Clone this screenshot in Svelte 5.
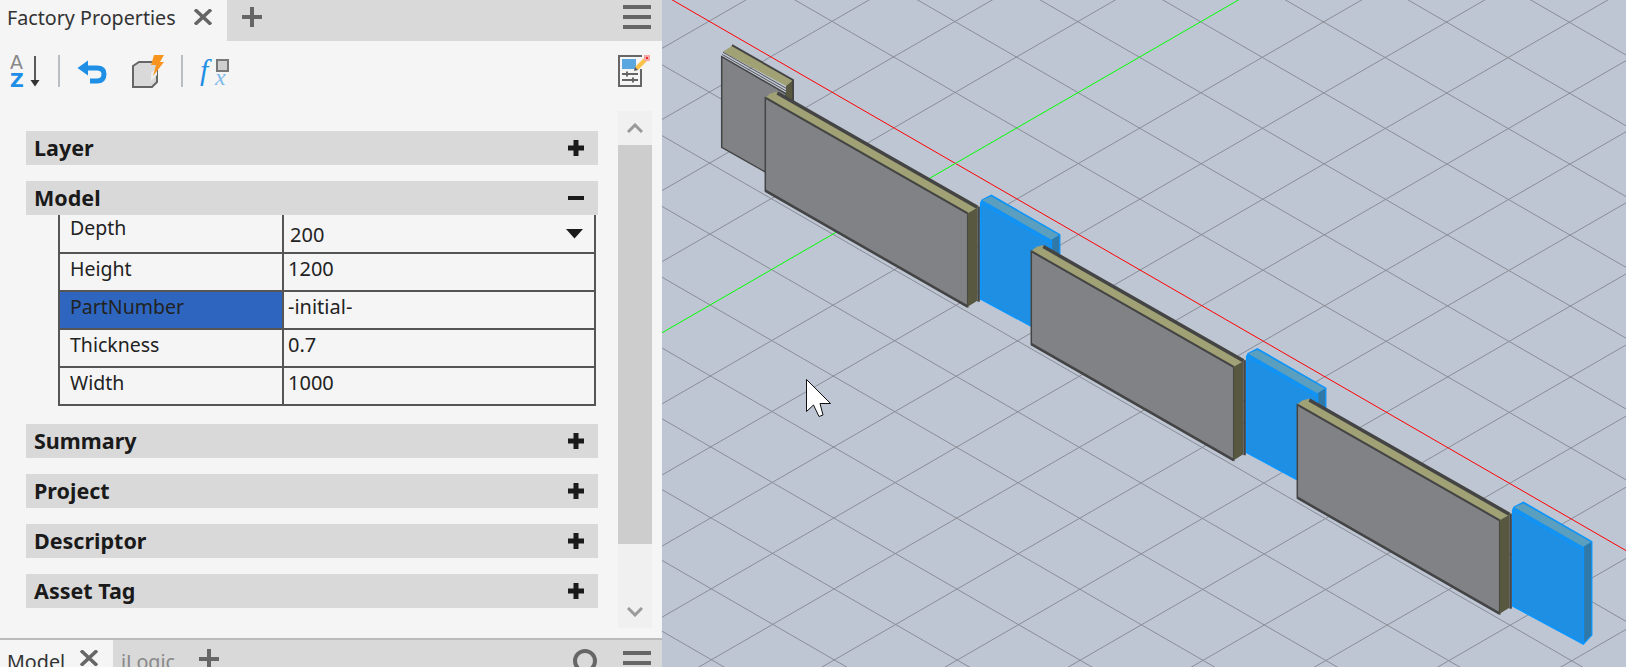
<script>
  const T = Math.tan(Math.PI / 6);
  const X0 = 662, X1 = 1626, STEP_C = 70.8, STEP_D = 71.1;
  const cRed = -388.2, dGreen = 715;
  const grid = [];
  for (let k = -8; k < 20; k++) {
    const c = cRed + k * STEP_C;
    if (k !== 0) grid.push({ x1: X0, y1: c + T * X0, x2: X1, y2: c + T * X1 });
  }
  for (let k = -14; k < 24; k++) {
    const d = dGreen + k * STEP_D;
    if (k !== 0) grid.push({ x1: X0, y1: d - T * X0, x2: X1, y2: d - T * X1 });
  }
  const yRed = (x) => cRed + T * x;
  const yGreen = (x) => dGreen - T * x;
  const units = [0, 1, 2].map((i) => ({
    pan: `${765.3 + i * 266},${97.7 + i * 153.5}`,
    blue: `${980.7 + i * 266},${203 + i * 153.5}`
  }));
  const rows = [
    { k: 'Height', v: '1200' },
    { k: 'PartNumber', v: '-initial-', sel: true },
    { k: 'Thickness', v: '0.7' },
    { k: 'Width', v: '1000' }
  ];
  const sectionsBottom = ['Summary', 'Project', 'Descriptor', 'Asset Tag'];
  const plusPath = 'M5.5 0h5v5.500h5.500v5h-5.500v5.500h-5v-5.500H0v-5h5.500z';
</script>

<div class="app">
  <aside class="panel">
    <div class="tabbar">
      <div class="tab">
        <span class="tab-label">Factory Properties</span>
        <svg class="x" viewBox="0 0 18 16" width="18" height="16"><path d="M1 0.5 L17 15.5 M17 0.5 L1 15.5" /></svg>
      </div>
      <svg class="plus" viewBox="0 0 20 20" width="20" height="20"><path d="M8 0h4v8h8v4h-8v8h-4v-8h-8v-4h8z" /></svg>
      <svg class="burger" viewBox="0 0 28 24" width="28" height="24"><path d="M0 0h28v4H0zM0 10h28v4H0zM0 20h28v4H0z" /></svg>
    </div>

    <div class="toolbar">
      <svg class="ic-sort" viewBox="0 0 32 34" width="32" height="34">
        <text x="0" y="14" class="az a">A</text>
        <text x="0" y="32" class="az z">Z</text>
        <path d="M25 1v26" stroke="#333" stroke-width="1.6" fill="none" />
        <path d="M20.5 25h9l-4.500 6.500z" fill="#333" />
      </svg>
      <span class="sep"></span>
      <svg class="ic-undo" viewBox="0 0 30 24" width="30" height="24">
        <path d="M0.500 8 L11 0.500 V5.500 H20 Q29.500 5.500 29.500 14 Q29.500 23.500 20 23.500 H13 V18.500 H20 Q24.500 18.500 24.500 14 Q24.500 10.500 20 10.500 H11 V15.500 Z" fill="#1f8fe6" />
      </svg>
      <svg class="ic-cube" viewBox="0 0 34 34" width="34" height="34">
        <path d="M2 11 L8 7 H26 V27 L21 32 H2 Z" fill="#d9d9d9" stroke="#666" stroke-width="2" />
        <path d="M26 12 L20 18 V26 L26 20 Z" fill="#eeeeee" />
        <path d="M23 0 H33 L29 7 H33 L22 21 L25 10 H20 Z" fill="#f7941d" />
      </svg>
      <span class="sep sep2"></span>
      <svg class="ic-fx" viewBox="0 0 32 30" width="32" height="30">
        <text x="1" y="22" class="fx-f">f</text>
        <rect x="18" y="2" width="11" height="11" fill="#cfcfcf" stroke="#777" stroke-width="2" />
        <text x="16" y="27" class="fx-x">x</text>
      </svg>
      <svg class="ic-form" viewBox="0 0 32 32" width="32" height="32">
        <path d="M24 1 H1 V31 H23 V14" fill="#f5f5f5" stroke="#666" stroke-width="2" />
        <rect x="4" y="4" width="14" height="10" fill="#5aa7e0" />
        <path d="M4 19h16M4 25h16" stroke="#666" stroke-width="2" />
        <path d="M9 16.500v5M15 22.500v5" stroke="#666" stroke-width="2" />
        <path d="M17 12 L27 2 L30 5 L20 15 Z" fill="#fbc24a" />
        <path d="M16 16 L17 12 L20 15 Z" fill="#555" />
        <rect x="26" y="0" width="6" height="6" fill="#f9a8a8" />
        <rect x="28" y="2" width="2" height="2" fill="#ee2b2b" />
      </svg>
    </div>

    <div class="body">
      <div class="sections">
        <div class="sec">
          <span>Layer</span>
          <svg class="sign" viewBox="0 0 16 16" width="16" height="16"><path d={plusPath} /></svg>
        </div>
        <div class="sec flush">
          <span>Model</span>
          <svg class="sign" viewBox="0 0 16 16" width="16" height="16"><path d="M0 6h16v4H0z" /></svg>
        </div>
        <div class="table">
          <div class="row first">
            <div class="key depth">Depth</div>
            <div class="val val-depth">
              <span>200</span>
              <svg class="caret" viewBox="0 0 17 10" width="17" height="10"><path d="M0 0h17l-8.500 9.500z" /></svg>
            </div>
          </div>
          {#each rows as r}
            <div class="row">
              <div class="key" class:sel={r.sel}>{r.k}</div>
              <div class="val">{r.v}</div>
            </div>
          {/each}
        </div>

        <div class="lower">
          {#each sectionsBottom as s}
            <div class="sec">
              <span>{s}</span>
              <svg class="sign" viewBox="0 0 16 16" width="16" height="16"><path d={plusPath} /></svg>
            </div>
          {/each}
        </div>
      </div>

      <div class="scroll">
        <div class="sbtn">
          <svg viewBox="0 0 16 10" width="16" height="10"><path d="M1 9 L8 2 L15 9" /></svg>
        </div>
        <div class="thumb"></div>
        <div class="sbtn down">
          <svg viewBox="0 0 16 10" width="16" height="10"><path d="M1 1 L8 8 L15 1" /></svg>
        </div>
      </div>
    </div>

    <div class="bottom">
      <div class="btab">
        <span class="b-label">Model</span>
        <svg class="bx" viewBox="0 0 18 16" width="18" height="16"><path d="M1 0.500 L17 15.500 M17 0.500 L1 15.500" /></svg>
      </div>
      <span class="b-label off">iLogic</span>
      <svg class="bplus" viewBox="0 0 20 20" width="20" height="20"><path d="M8 0h4v8h8v4h-8v8h-4v-8h-8v-4h8z" /></svg>
      <svg class="search" viewBox="0 0 24 24" width="24" height="24"><circle cx="12" cy="12" r="10" /></svg>
      <svg class="burger2" viewBox="0 0 28 16" width="28" height="16"><path d="M0 0h28v4H0zM0 10h28v4H0z" /></svg>
    </div>
  </aside>

  <svg class="view" viewBox="662 0 964 667" width="964" height="667">
    <defs>
      <g id="panel">
        <polygon points="0,0 202.400,115.600 202.400,209 0,93" fill="#808285" stroke="#444" stroke-width="1.500" />
        <polyline points="0,93 202.400,209" fill="none" stroke="#444" stroke-width="2.500" />
        <polygon points="0,0 5,-4 11.400,-5.700 214,109 202.400,115.600" fill="#a1a176" stroke="#a1a176" stroke-width="0.500" />
        <polyline points="12,-4.600 212,109.500" fill="none" stroke="#444" stroke-width="3.500" />
        <polyline points="0,0 202.400,115.600" fill="none" stroke="#444" stroke-width="2" />
        <polygon points="202.400,115.600 212,110 212,203 202.400,209" fill="#58573f" />
        <path d="M213.300 109 V204" stroke="#444" stroke-width="2.500" fill="none" />
      </g>
      <g id="blue">
        <polygon points="0,0 1.500,-3 10.700,-7.700 79,31.700 79,125 70.600,134 0,96" fill="#1f8fe3" stroke="#0a96ff" stroke-width="1.500" />
        <polygon points="1.500,-3 10.700,-6.500 78,32 70.600,36.700" fill="#5a9fbf" />
        <polygon points="71.500,36.500 78.500,32.500 78.500,125 71.500,132" fill="#2f78a8" />
        <path d="M0 0 L70.600 40.500 M0.500 -2 L70.600 38 M70.600 36.700 V134" stroke="#0a96ff" stroke-width="1.200" fill="none" />
      </g>
    </defs>
    <rect x="662" y="0" width="964" height="667" fill="#bec6d4" />
    {#each grid as g}
      <line x1={g.x1} y1={g.y1} x2={g.x2} y2={g.y2} stroke="#8a8d96" stroke-width="1" />
    {/each}
    <line x1={X0} y1={yRed(X0)} x2={X1} y2={yRed(X1)} stroke="#ff0000" stroke-width="1" />
    <line x1={X0} y1={yGreen(X0)} x2={1300} y2={yGreen(1300)} stroke="#00ff00" stroke-width="1" />

    <g transform="translate(721.700 56.700)">
      <polygon points="0,0 64.300,37 64.300,127 0,90.600" fill="#808285" stroke="#444" stroke-width="1.500" />
      <polygon points="1.300,-5 10.300,-11 71.300,23.300 64.300,29.300" fill="#a1a176" />
      <polyline points="10.300,-11.500 71.300,23.300 71.300,60" fill="none" stroke="#444" stroke-width="2" />
      <polygon points="64.300,29.300 70.500,24 70.500,60 64.300,60" fill="#58573f" />
      <path d="M1.300 -4.500 L64.300 31.500 M0.600 -2.200 L64.300 34.200" stroke="#555" stroke-width="1" fill="none" />
    </g>

    {#each units as u}
      <use href="#panel" transform="translate({u.pan})" />
      <use href="#blue" transform="translate({u.blue})" />
    {/each}

    <path class="cursor" d="M806.500 379.500 L806.500 411.500 L813.500 405 L819 416.500 L823 415 L820 403.500 L830.500 403.500 Z" />
  </svg>
</div>

<style>
  :global(body) { margin: 0; background: #f5f5f5; }
  .app {
    display: flex;
    width: 1626px;
    height: 667px;
    overflow: hidden;
    font-family: "Noto Sans", "Open Sans", sans-serif;
    color: #222;
  }
  .panel {
    width: 662px;
    flex: none;
    display: flex;
    flex-direction: column;
    background: #f5f5f5;
  }
  .tabbar {
    height: 41px;
    display: flex;
    align-items: center;
    background: #d9d9d9;
  }
  .tab {
    width: 227px;
    height: 41px;
    background: #f5f5f5;
    display: flex;
    align-items: center;
    padding-left: 7px;
    box-sizing: border-box;
  }
  .tab-label { font-size: 19.700px; width: 187px; color: #333; white-space: nowrap; margin-top: -6px; }
  .x { margin-top: -7px; }
  .x path, .bx path { stroke: #666; stroke-width: 3.500; fill: none; }
  .plus { margin-left: 15px; margin-top: -7px; }
  .plus path, .bplus path, .burger path, .burger2 path { fill: #666; }
  .burger { margin-left: auto; margin-right: 11px; margin-top: -7px; }
  .toolbar {
    height: 70px;
    box-sizing: border-box;
    padding-top: 14px;
    padding-left: 10px;
    display: flex;
    align-items: flex-start;
  }
  .toolbar svg { overflow: visible; }
  .az { font-size: 19px; font-family: "DejaVu Sans", sans-serif; }
  .az.a { fill: #888; }
  .az.z { fill: #1f8fe6; font-weight: 700; }
  .sep { width: 2px; height: 32px; background: #b9bec5; margin-left: 16px; }
  .ic-undo { margin-left: 17px; margin-top: 5px; }
  .ic-cube { margin-left: 24px; }
  .sep2 { margin-left: 16px; }
  .ic-fx { margin-left: 16px; margin-top: 3px; }
  .fx-f { font-family: "Liberation Serif", serif; font-style: italic; font-size: 30px; fill: #1f8fe6; }
  .fx-x { font-family: "Liberation Serif", serif; font-style: italic; font-size: 24px; fill: #7db9ea; }
  .ic-form { margin-left: auto; margin-right: 12px; }
  .body {
    height: 527px;
    display: flex;
    align-items: flex-start;
  }
  .sections {
    width: 572px;
    margin-left: 26px;
    padding-top: 20px;
    display: flex;
    flex-direction: column;
  }
  .sec {
    height: 34px;
    background: #d9d9d9;
    display: flex;
    align-items: center;
    justify-content: space-between;
    padding: 0 14px 0 8px;
    margin-bottom: 16px;
    font-weight: 700;
    font-size: 21.500px;
    color: #1a1a1a;
    box-sizing: border-box;
    flex: none;
  }
  .sec span { margin-top: -2px; }
  .sign path { fill: #1a1a1a; }
  .sec.flush { margin-bottom: 0; }
  .table {
    width: 538px;
    margin-left: 32px;
    box-sizing: border-box;
    border: 2px solid #555;
    border-top: 0;
    font-size: 19.500px;
    color: #222;
  }
  .row {
    height: 38px;
    display: flex;
    box-sizing: border-box;
    border-top: 2px solid #555;
  }
  .row.first { height: 37px; border-top: 0; }
  .key {
    width: 222px;
    flex: none;
    padding-left: 10px;
    padding-bottom: 8px;
    box-sizing: border-box;
    display: flex;
    align-items: center;
  }
  .key.depth { align-items: flex-start; padding-top: 0; padding-bottom: 0; line-height: 26px; }
  .key.sel { background: #2e66bf; }
  .val {
    flex: 1;
    border-left: 2px solid #555;
    padding-left: 4px;
    padding-bottom: 8px;
    display: flex;
    align-items: center;
    font-size: 20px;
    box-sizing: border-box;
  }
  .val-depth { padding: 2px 11px 0 6px; justify-content: space-between; }
  .caret { margin-top: -2px; }
  .caret path { fill: #1a1a1a; }
  .lower { margin-top: 18px; display: flex; flex-direction: column; }
  .scroll {
    width: 34px;
    height: 517px;
    margin-left: 20px;
    background: #f0f0f0;
    display: flex;
    flex-direction: column;
    flex: none;
  }
  .sbtn { height: 34px; display: flex; align-items: center; justify-content: center; flex: none; }
  .sbtn.down { height: 84px; align-items: flex-end; padding-bottom: 11px; box-sizing: border-box; }
  .sbtn path { fill: none; stroke: #9a9a9a; stroke-width: 3; }
  .thumb { height: 399px; background: #cdcdcd; flex: none; }
  .bottom {
    height: 29px;
    box-sizing: border-box;
    border-top: 2px solid #bbb;
    background: #d9d9d9;
    display: flex;
    align-items: flex-start;
    overflow: hidden;
  }
  .btab {
    width: 113px;
    height: 27px;
    background: #f5f5f5;
    display: flex;
    align-items: flex-start;
    padding-left: 7px;
    box-sizing: border-box;
    flex: none;
  }
  .b-label { font-size: 19.700px; line-height: 25px; margin-top: 9px; width: 73px; color: #333; flex: none; }
  .b-label.off { color: #888; width: auto; margin-left: 8px; }
  .bx { margin-top: 10px; flex: none; }
  .bplus { margin-left: 24px; margin-top: 9px; flex: none; }
  .search { margin-left: auto; margin-top: 9px; flex: none; }
  .search circle { fill: none; stroke: #666; stroke-width: 4; }
  .burger2 { margin-left: 26px; margin-right: 11px; margin-top: 11px; flex: none; }
  .view { display: block; flex: none; }
  .cursor { fill: #fff; stroke: #111; stroke-width: 1; stroke-linejoin: round; }
</style>
